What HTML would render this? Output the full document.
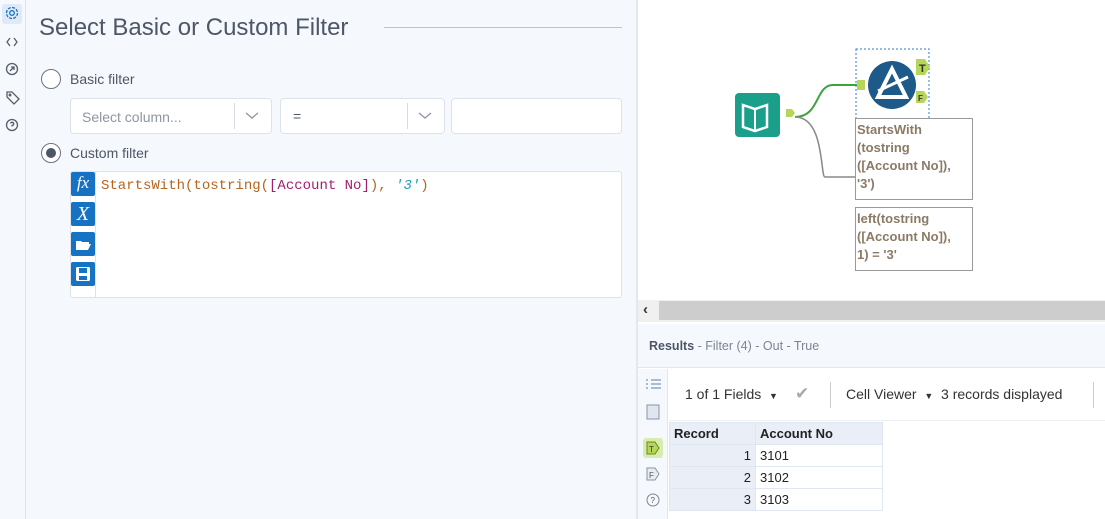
<!DOCTYPE html>
<html><head><style>
*{margin:0;padding:0;box-sizing:border-box}
body{width:1105px;height:519px;overflow:hidden;background:#fff;font-family:"Liberation Sans",sans-serif;position:relative}
.abs{position:absolute}
.sb{left:0;top:0;width:26px;height:519px;background:#f5f8fd;border-right:1px solid #dfe3ea}
.main{left:26px;top:0;width:610px;height:519px;background:#f5f8fd}
.div{left:636px;top:0;width:2px;height:519px;background:#e4e7ec}
.box{background:#fff;border:1px solid #dde3ec;border-radius:4px}
.btn{width:24px;height:24px;background:#1673c4;border-radius:2px;color:#fff;text-align:center}
.code{font-family:"Liberation Mono",monospace;font-size:14px}
.note{background:#fff;border:1px solid #999;font-size:13px;color:#8a7a66;font-weight:bold;line-height:18px;padding:2px 1px}
td{border:1px solid #dfe6f0;font-size:13px;height:22px;padding:0 4px;color:#222}
</style></head><body>
<div class="abs sb"></div>
<div class="abs" style="left:2px;top:4px;width:20px;height:20px;background:#dfe9f7;border-radius:3px"></div>
<svg class="abs" style="left:4px;top:5px" width="16" height="135" viewBox="0 0 16 135" fill="none" stroke="#555e6b" stroke-width="1.3">
<circle cx="8" cy="8" r="2.3" stroke="#1673c4"/><circle cx="8" cy="8" r="5.5" stroke="#1673c4" stroke-dasharray="3 1.3"/>
<path d="M6 33l-3 4 3 4M10 33l3 4-3 4"/>
<circle cx="8" cy="64" r="5.5"/><path d="M6 66l4-4M7 62h3v3"/>
<path d="M3 87v5l7 7 5-5-7-7z"/><circle cx="6" cy="90" r="0.8"/>
<circle cx="8" cy="120" r="5.5"/><path d="M6.5 118.5a1.6 1.6 0 1 1 1.5 2v1"/>
</svg>
<div class="abs main"></div>
<div class="abs" style="left:39px;top:14px;font-size:24px;color:#4d5766">Select Basic or Custom Filter</div>
<div class="abs" style="left:384px;top:27px;width:238px;height:1px;background:#bfc4cc"></div>
<div class="abs" style="left:41px;top:69px;width:20px;height:20px;border:1.5px solid #6d7480;border-radius:50%;background:#fff"></div>
<div class="abs" style="left:70px;top:71px;font-size:14px;color:#4d5766">Basic filter</div>
<div class="abs box" style="left:70px;top:98px;width:202px;height:36px"></div>
<div class="abs" style="left:82px;top:109px;font-size:14px;color:#8e96a3">Select column...</div>
<div class="abs" style="left:234px;top:103px;width:1px;height:26px;background:#d6dbe3"></div>
<svg class="abs" style="left:245px;top:112px" width="14" height="8"><path d="M1 1l6 5 6-5" stroke="#8e96a3" fill="none" stroke-width="1.3"/></svg>
<div class="abs box" style="left:280px;top:98px;width:165px;height:36px"></div>
<div class="abs" style="left:293px;top:108px;font-size:14px;color:#4d5766">=</div>
<div class="abs" style="left:407px;top:103px;width:1px;height:26px;background:#d6dbe3"></div>
<svg class="abs" style="left:418px;top:112px" width="14" height="8"><path d="M1 1l6 5 6-5" stroke="#8e96a3" fill="none" stroke-width="1.3"/></svg>
<div class="abs box" style="left:451px;top:98px;width:171px;height:36px"></div>
<div class="abs" style="left:41px;top:143px;width:20px;height:20px;border:1.5px solid #6d7480;border-radius:50%;background:#fff"></div>
<div class="abs" style="left:46px;top:148px;width:10px;height:10px;border-radius:50%;background:#4d5766"></div>
<div class="abs" style="left:70px;top:145px;font-size:14px;color:#4d5766">Custom filter</div>
<div class="abs box" style="left:70px;top:171px;width:552px;height:127px;border-radius:3px"></div>
<div class="abs" style="left:95px;top:172px;width:1px;height:125px;background:#dde3ec"></div>
<div class="abs btn" style="left:71px;top:172px;font-family:'Liberation Serif',serif;font-style:italic;font-size:17px;line-height:22px">fx</div>
<div class="abs btn" style="left:71px;top:202px;font-family:'Liberation Serif',serif;font-style:italic;font-size:20px;line-height:24px">X</div>
<div class="abs btn" style="left:71px;top:232px"><svg width="24" height="24"><path d="M5 9h5l1 1h7v2H9l-3 6H5z M9 12h11l-3 6H6z" fill="#fff"/></svg></div>
<div class="abs btn" style="left:71px;top:262px"><svg width="24" height="24"><rect x="5" y="5" width="14" height="14" rx="1.5" fill="#fff"/><rect x="8" y="6" width="8" height="5" fill="#1673c4"/><rect x="8" y="14" width="8" height="4" fill="#1673c4"/></svg></div>
<div class="abs code" style="left:101px;top:178px;color:#b5651d">StartsWith(tostring(<span style="color:#a3206f">[Account No]</span>), <span style="color:#1e9db5;font-style:italic">'3'</span>)</div>
<div class="abs div"></div>
<!-- canvas -->
<svg class="abs" style="left:730px;top:45px" width="250" height="230">
<path d="M65 72c25 0 20-32 38-32h26" stroke="#3aa63a" stroke-width="2" fill="none"/>
<path d="M65 72c30 0 25 60 30 60h32" stroke="#888" stroke-width="1.5" fill="none"/>
<rect x="5" y="48" width="45" height="44" rx="4" fill="#1aa08a"/>
<path d="M13 60l12 4 12-4v22l-12 4-12-4z" fill="none" stroke="#fff" stroke-width="2.5"/><path d="M25 64v22" stroke="#fff" stroke-width="2"/>
<path d="M56 64h6l3 4-3 4h-6z" fill="#b6d65a"/>
<rect x="126" y="4" width="73" height="70" fill="none" stroke="#2a7fd4" stroke-dasharray="2 2"/>
<rect x="127" y="35" width="8" height="10" fill="#b6d65a"/>
<circle cx="162" cy="40" r="24" fill="#1d5a8a"/>
<path d="M162 24l-14 28h28z" fill="none" stroke="#fff" stroke-width="4"/><path d="M148 46l30-14" stroke="#fff" stroke-width="3"/>
<path d="M186 14h9l5 8-5 8h-9z" fill="#b6d65a"/><text x="189" y="27" font-size="11" font-weight="bold" fill="#333" font-family="Liberation Sans">T</text>
<path d="M186 46h8l4 6-4 6h-8z" fill="#b6d65a"/><text x="188" y="56" font-size="8" font-weight="bold" fill="#333" font-family="Liberation Sans">F</text>
</svg>
<div class="abs note" style="left:855px;top:118px;width:118px;height:82px">StartsWith<br>(tostring<br>([Account No]),<br>'3')</div>
<div class="abs note" style="left:855px;top:207px;width:118px;height:64px">left(tostring<br>([Account No]),<br>1) = '3'</div>
<!-- scrollbar -->
<div class="abs" style="left:638px;top:300px;width:467px;height:22px;background:#f0f0f0"></div>
<div class="abs" style="left:659px;top:301px;width:446px;height:19px;background:#cdcdcd"></div>
<div class="abs" style="left:643px;top:301px;font-size:15px;font-weight:bold;color:#333">‹</div>
<div class="abs" style="left:638px;top:324px;width:467px;height:44px;background:#f5f8fd;border-bottom:1px solid #e2e6ec"></div>
<div class="abs" style="left:649px;top:339px;font-size:12.5px;color:#7b8594"><b style="color:#4d5766">Results</b> - Filter (4) - Out - True</div>
<div class="abs" style="left:638px;top:369px;width:30px;height:150px;background:#f5f8fd;border-right:1px solid #e2e6ec"></div>
<svg class="abs" style="left:643px;top:376px" width="22" height="138" fill="none" stroke="#7b8594">
<path d="M3 4h2M8 4h10M3 8h2M8 8h10M3 12h2M8 12h10" stroke="#5a7aa8"/>
<rect x="4" y="29" width="12" height="14" fill="#dfe6f0" stroke="#8895a8"/>
<rect x="0" y="62" width="20" height="20" rx="3" fill="#d8ecb0" stroke="none"/>
<path d="M4 66h8l4 6-4 6H4z" fill="#b6d65a" stroke="#6a8a20"/><text x="6" y="76" font-size="8" fill="#333" stroke="none" font-family="Liberation Sans">T</text>
<path d="M4 92h8l4 6-4 6H4z" fill="#e8ecf3" stroke="#8895a8"/><text x="6" y="102" font-size="8" fill="#555" stroke="none" font-family="Liberation Sans">F</text>
<circle cx="10" cy="124" r="6"/><text x="7.5" y="127" font-size="8" fill="#555" stroke="none" font-family="Liberation Sans">?</text>
</svg>
<div class="abs" style="left:669px;top:369px;width:436px;height:52px;background:#fff;border-bottom:1px solid #eef0f4"></div>
<div class="abs" style="left:685px;top:386px;font-size:14px;color:#333">1 of 1 Fields &nbsp;<span style="font-size:9px">▼</span></div>
<div class="abs" style="left:795px;top:384px;font-size:17px;color:#aaa">✔</div>
<div class="abs" style="left:830px;top:382px;width:1px;height:26px;background:#ccc"></div>
<div class="abs" style="left:846px;top:386px;font-size:14px;color:#333">Cell Viewer &nbsp;<span style="font-size:9px">▼</span>&nbsp; 3 records displayed</div>
<div class="abs" style="left:1093px;top:382px;width:1px;height:26px;background:#ccc"></div>
<table class="abs" style="left:669px;top:422px;border-collapse:collapse">
<tr style="background:#e9eef7;font-weight:bold"><td style="width:86px;font-weight:bold">Record</td><td style="width:127px;font-weight:bold">Account No</td></tr>
<tr><td style="text-align:right;background:#e9eef7">1</td><td>3101</td></tr>
<tr><td style="text-align:right;background:#e9eef7">2</td><td>3102</td></tr>
<tr><td style="text-align:right;background:#e9eef7">3</td><td>3103</td></tr>
</table>
</body></html>
